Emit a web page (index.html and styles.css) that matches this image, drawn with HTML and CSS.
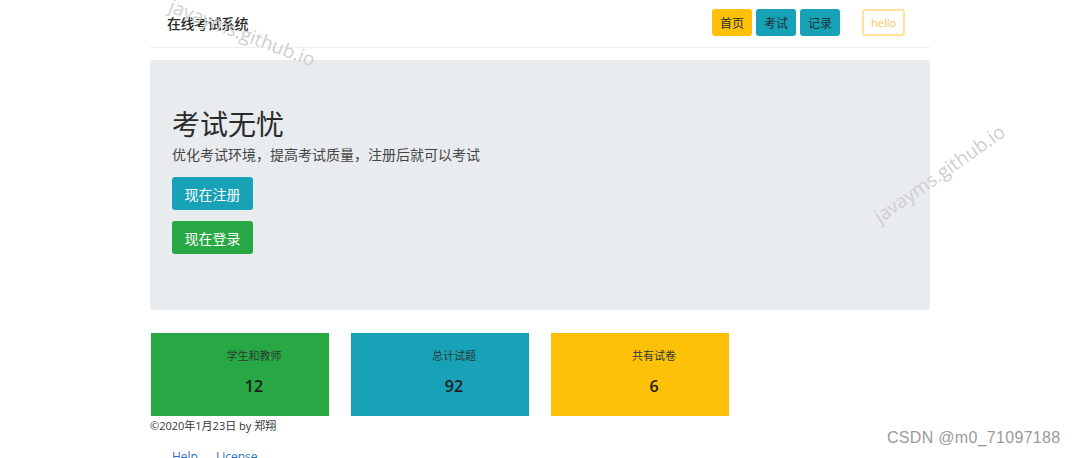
FILE: index.html
```html
<!DOCTYPE html>
<html lang="zh-CN">
<head>
<meta charset="utf-8">
<title>在线考试系统</title>
<link rel="stylesheet" href="styles.css">
</head>
<body>
<div class="page">
  <header class="navbar">
    <div class="brand">在线考试系统</div>
    <nav class="nav">
      <a class="btn btn-warning nav-btn">首页</a>
      <a class="btn btn-info nav-btn">考试</a>
      <a class="btn btn-info nav-btn">记录</a>
      <a class="btn btn-outline nav-hello">hello</a>
    </nav>
  </header>

  <section class="jumbotron">
    <h1 class="title">考试无忧</h1>
    <p class="lead">优化考试环境，提高考试质量，注册后就可以考试</p>
    <a class="btn btn-info big-btn">现在注册</a>
    <a class="btn btn-success big-btn">现在登录</a>
  </section>

  <section class="stats">
    <div class="card card-green">
      <div class="card-label">学生和教师</div>
      <div class="card-num">12</div>
    </div>
    <div class="card card-blue">
      <div class="card-label">总计试题</div>
      <div class="card-num">92</div>
    </div>
    <div class="card card-yellow">
      <div class="card-label">共有试卷</div>
      <div class="card-num">6</div>
    </div>
  </section>

  <footer class="footer">
    <div class="copy">©2020年1月23日 by 郑翔</div>
    <div class="links"><a>Help</a><a>License</a></div>
  </footer>
</div>

<div class="wm wm-top">javayms.github.io</div>
<div class="wm wm-right">javayms.github.io</div>
<div class="csdn">CSDN @m0_71097188</div>
</body>
</html>
```
FILE: styles.css
```css
* { box-sizing: border-box; }
html, body { margin: 0; padding: 0; background: #fff; }
body {
  font-family: "Open Sans", "Noto Sans CJK SC", sans-serif;
  color: #333;
  width: 1076px;
  height: 458px;
  overflow: hidden;
  position: relative;
}
.page {
  width: 780px;
  margin-left: 150px;
}
.navbar {
  height: 48px;
  border-bottom: 1px solid #eeeeee;
  display: flex;
  align-items: center;
  justify-content: space-between;
  padding: 0 25px 2px 17px;
}
.brand {
  font-size: 14px;
  font-weight: 500;
  color: #2a2a2a;
  letter-spacing: -0.5px;
}
.nav { display: flex; align-items: center; gap: 4px; }
.btn {
  display: inline-flex;
  align-items: center;
  justify-content: center;
  border-radius: 3px;
  text-decoration: none;
}
.nav-btn {
  width: 40px;
  height: 27px;
  font-size: 12px;
  color: #1e2f33;
}
.btn-warning { background: #ffc107; }
.btn-info { background: #17a2b8; }
.btn-success { background: #28a745; }
.nav-hello {
  margin-left: 18px;
  width: 43px;
  height: 27px;
  border: 2px solid #ffe39a;
  color: #f2c25a;
  font-size: 11px;
}
.jumbotron {
  margin-top: 12px;
  height: 250px;
  background: #e9ecef;
  border-radius: 3px;
  padding: 44px 22px 0;
  display: flex;
  flex-direction: column;
  align-items: flex-start;
}
.title {
  margin: 0;
  font-size: 28px;
  font-weight: 400;
  line-height: 40px;
  color: #2b2b2b;
}
.lead {
  margin: 0 0 11px;
  font-size: 14px;
  line-height: 22px;
  color: #454545;
}
.big-btn {
  width: 81px;
  height: 33px;
  font-size: 14px;
  color: #fff;
  margin-bottom: 11px;
}
.stats {
  margin-top: 23px;
  display: flex;
  gap: 22px;
  padding-left: 1px;
}
.card {
  width: 178px;
  height: 83px;
  display: flex;
  flex-direction: column;
  align-items: center;
  padding: 14px 0 0 28px;
}
.card-green { background: #28a745; }
.card-blue { background: #17a2b8; }
.card-yellow { background: #ffc107; }
.card-label {
  font-size: 11px;
  line-height: 18px;
  color: #2b3a30;
}
.card-num {
  margin-top: 11px;
  font-size: 16px;
  font-weight: 600;
  line-height: 20px;
  color: #1c1c1c;
}
.footer { padding-top: 1px; }
.copy {
  font-size: 11px;
  line-height: 18px;
  color: #333;
}
.links {
  margin-top: 14px;
  padding-left: 22px;
  display: flex;
  gap: 18px;
  font-size: 12px;
  line-height: 16px;
}
.links a { color: #2d6fc4; }
.wm {
  position: absolute;
  font-family: "Open Sans", sans-serif;
  color: #cfcfcf;
  white-space: nowrap;
  pointer-events: none;
  transform-origin: 0 50%;
}
.wm-top {
  left: 170px;
  top: -8px;
  font-size: 19px;
  transform: rotate(21deg);
}
.wm-right {
  left: 876px;
  top: 205px;
  font-size: 19px;
  transform: rotate(-35deg);
}
.csdn {
  position: absolute;
  left: 887px;
  top: 429px;
  font-family: "Liberation Sans", sans-serif;
  font-size: 16px;
  color: #9a9a9a;
  letter-spacing: 0.3px;
}
```
